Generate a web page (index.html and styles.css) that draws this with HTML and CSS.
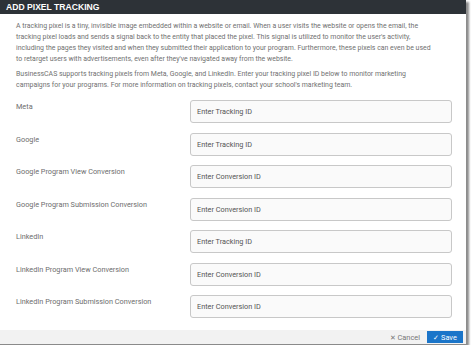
FILE: index.html
```html
<!DOCTYPE html>
<html lang="en">
  <head>
    <meta charset="UTF-8" />
    <title>Add Pixel Tracking</title>
    <link rel="stylesheet" href="styles.css">
  </head>
  <body>
    <div class="dialog">
      <div class="dialog-header">ADD PIXEL TRACKING</div>

      <div class="dialog-body">
        <p>
          A tracking pixel is a tiny, invisible image embedded within a website or email. When a user visits the website or opens the email, the<br>
          tracking pixel loads and sends a signal back to the entity that placed the pixel. This signal is utilized to monitor the user's activity,<br>
          including the pages they visited and when they submitted their application to your program. Furthermore, these pixels can even be used<br>
          to retarget users with advertisements, even after they've navigated away from the website.
        </p>
        <p>
          BusinessCAS supports tracking pixels from Meta, Google, and LinkedIn. Enter your tracking pixel ID below to monitor marketing<br>
          campaigns for your programs. For more information on tracking pixels, contact your school's marketing team.
        </p>

        <div class="form">
          <label for="meta">Meta</label>
          <input type="text" id="meta" placeholder="Enter Tracking ID" />

          <label for="google">Google</label>
          <input type="text" id="google" placeholder="Enter Tracking ID" />

          <label for="googleView">Google Program View Conversion</label>
          <input type="text" id="googleView" placeholder="Enter Conversion ID" />

          <label for="googleSubmit">Google Program Submission Conversion</label>
          <input type="text" id="googleSubmit" placeholder="Enter Conversion ID" />

          <label for="linkedin">LinkedIn</label>
          <input type="text" id="linkedin" placeholder="Enter Tracking ID" />

          <label for="linkedinView">LinkedIn Program View Conversion</label>
          <input type="text" id="linkedinView" placeholder="Enter Conversion ID" />

          <label for="linkedinSubmit">LinkedIn Program Submission Conversion</label>
          <input type="text" id="linkedinSubmit" placeholder="Enter Conversion ID" />
        </div>
      </div>

      <div class="dialog-footer">
        <button class="btn-cancel">&#x2715; Cancel</button>
        <button class="btn-save">&#x2713; Save</button>
      </div>
    </div>
  </body>
</html>
```

FILE: styles.css
```css
body {
  margin: 0;
  background: white;
  font-family: Roboto, "Liberation Sans", sans-serif;
}
.dialog {
  width: 466px;
  background: white;
  box-shadow: 3px 2px 2px rgba(0, 0, 0, 0.45);
}
.dialog-header {
  height: 14px;
  line-height: 15px;
  padding-left: 6px;
  background: #2d3237;
  color: white;
  font-family: "Liberation Sans", Arial, sans-serif;
  font-weight: bold;
  font-size: 8.6px;
}
.dialog-body {
  padding: 7px 14px 12px 16px;
}
.dialog-body p {
  margin: 0 0 4px;
  font-size: 6.95px;
  line-height: 11px;
  color: #707070;
  white-space: nowrap;
}
.form {
  display: grid;
  grid-template-columns: 174px 262px;
  row-gap: 9.5px;
  margin-top: 9px;
}
.form label {
  padding-top: 2px;
  font-size: 7.3px;
  color: #6e6e6e;
}
.form input {
  height: 23px;
  box-sizing: border-box;
  padding: 0 6px;
  border: 1px solid #c8c8c8;
  border-radius: 3px;
  background: #fafafa;
  font-family: Roboto, "Liberation Sans", sans-serif;
  font-size: 7.3px;
  color: #444;
}
.form input::placeholder {
  color: #555;
}
.dialog-footer {
  display: flex;
  justify-content: flex-end;
  align-items: center;
  gap: 7px;
  height: 14px;
  padding-right: 3px;
  background: #f2f2f2;
  border-bottom: 1px solid #8a8a8a;
}
.dialog-footer button {
  border: none;
  font-family: Roboto, "Liberation Sans", sans-serif;
  font-size: 7.4px;
  cursor: pointer;
}
.btn-cancel {
  padding: 0;
  background: none;
  color: #777;
}
.btn-save {
  height: 12px;
  width: 36px;
  padding: 0;
  background: #1b75c9;
  color: white;
}
```
